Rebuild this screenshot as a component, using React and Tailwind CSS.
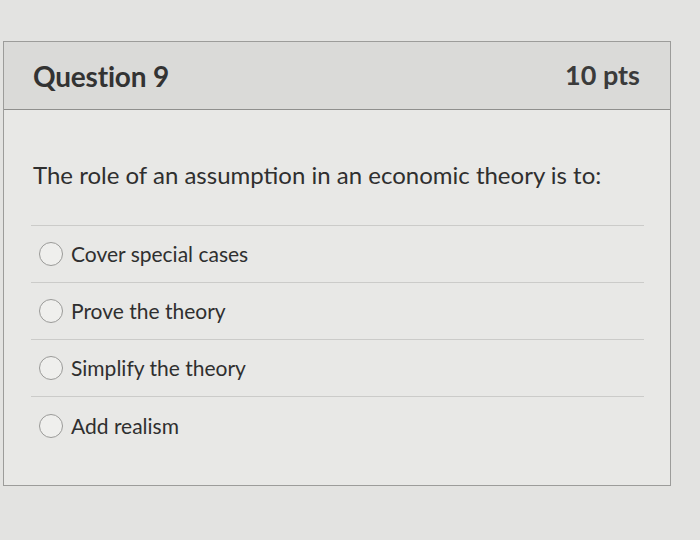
export default function App() {
  const options = [
    "Cover special cases",
    "Prove the theory",
    "Simplify the theory",
    "Add realism",
  ];

  return (
    <div
      className="w-[700px] h-[540px] bg-[#e3e3e1] pt-[41px] pl-[3px] overflow-hidden"
      style={{ fontFamily: "Lato, 'Open Sans', sans-serif" }}
    >
      <div className="w-[668px] h-[445px] border border-[#9c9c9a] bg-[#e8e8e6]">
        {/* Header */}
        <div className="h-[68px] flex items-center justify-between pl-[29px] pr-[30px] bg-[#dadad8] border-b border-[#8f8f8d]">
          <h2 className="text-[28px] font-bold text-[#333333] tracking-[-0.2px]">Question 9</h2>
          <span className="text-[27px] font-bold text-[#3b3b3b]">10 pts</span>
        </div>

        {/* Body */}
        <div className="pl-[27px] pr-[26px] pt-[50px]">
          <p className="text-[24px] leading-[30px] text-[#2f2f2f] pl-[2px] pb-[35px] border-b border-[#cbcbc9]">
            The role of an assumption in an economic theory is to:
          </p>
          <div>
            {options.map((label, i) => (
              <div
                key={label}
                className={
                  "h-[57px] flex items-center pl-[8px] " +
                  (i < options.length - 1 ? "border-b border-[#cbcbc9]" : "")
                }
              >
                <span className="w-[24px] h-[24px] rounded-full border-[1.5px] border-[#9a9a98] bg-[#efefed] shrink-0" />
                <span className="ml-[8px] text-[21px] text-[#2f2f2f]">{label}</span>
              </div>
            ))}
          </div>
        </div>
      </div>
    </div>
  );
}
